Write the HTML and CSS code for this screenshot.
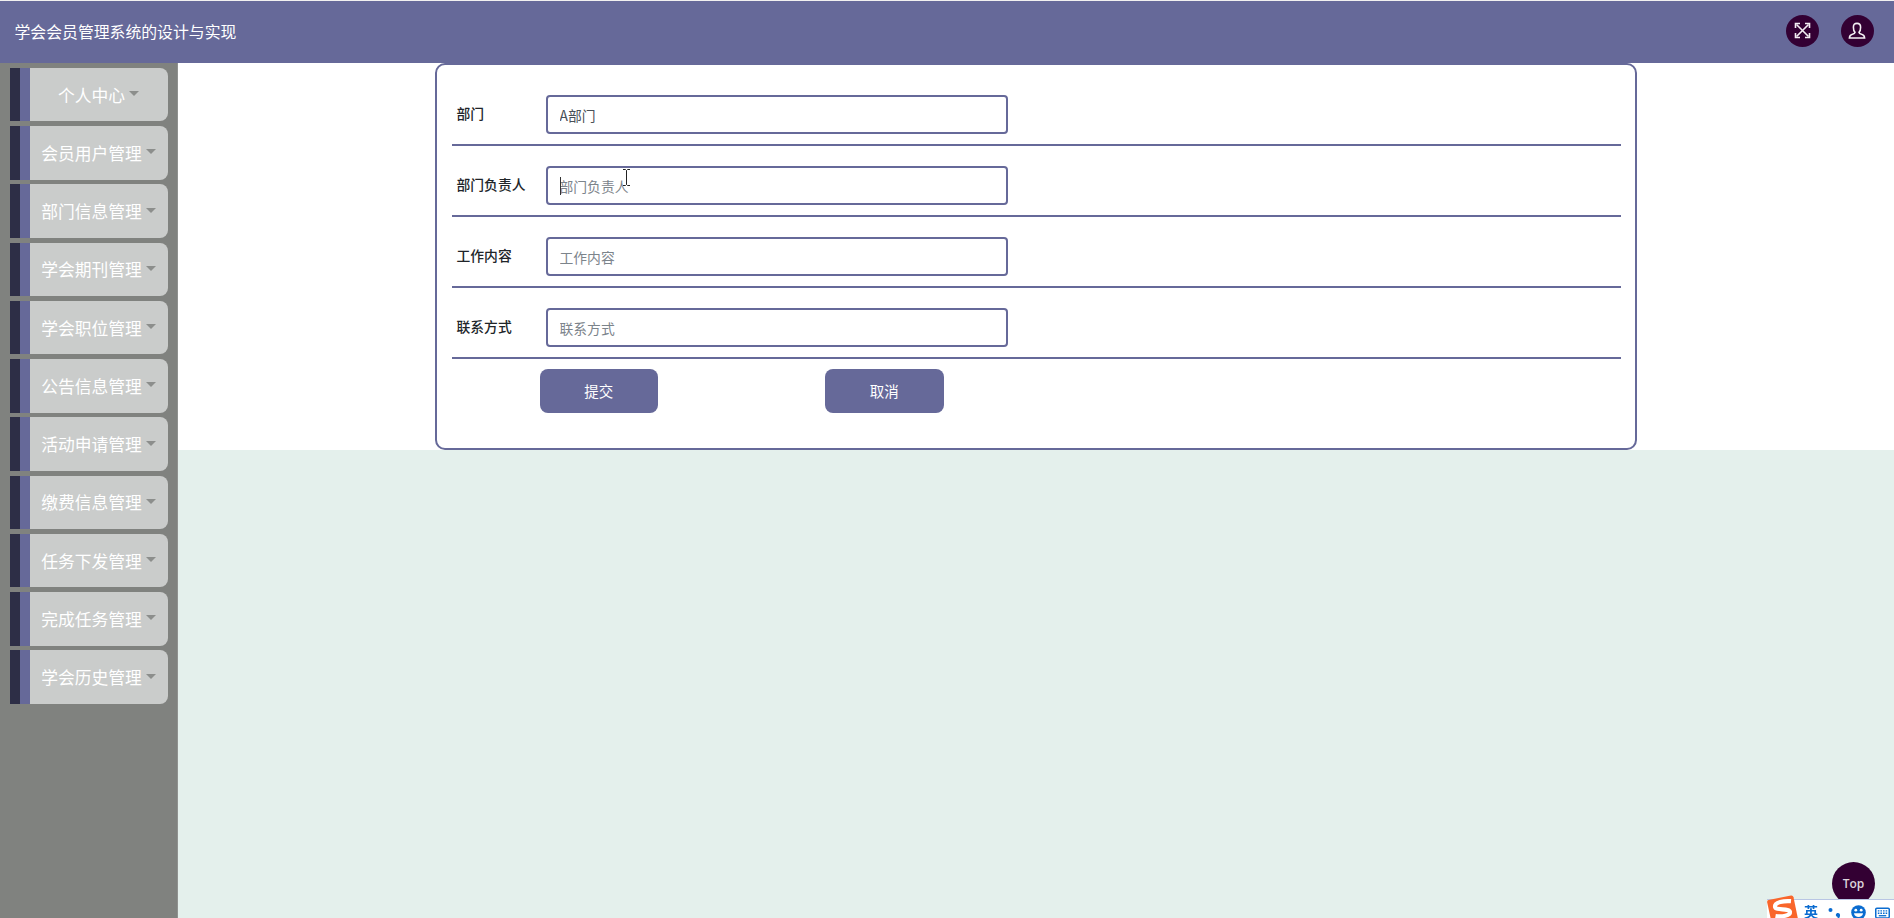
FILE: index.html
```
<!DOCTYPE html>
<html lang="zh-CN">
<head>
    <meta charset="UTF-8">
    <meta name="viewport" content="width=device-width, initial-scale=1.0">
    <title>学会会员管理系统的设计与实现</title>
    <link rel="stylesheet" href="styles.css">
</head>
<body>
    <header class="header">
        <h1 class="header-title">学会会员管理系统的设计与实现</h1>
        <div class="header-tools">
            <a class="round-btn" title="全屏">
                <svg width="17" height="17" viewBox="0 0 17 17" fill="none" stroke="#f3eef3" stroke-width="1.6">
                    <path d="M2.500 2.500l12 12M14.500 2.500l-12 12"/>
                    <path d="M1.500 6V1.500H6M11 1.500h4.500V6M15.500 11v4.500H11M6 15.500H1.500V11"/>
                </svg>
            </a>
            <a class="round-btn" title="个人">
                <svg width="18" height="18" viewBox="0 0 18 18" fill="none" stroke="#f3eef3" stroke-width="1.6">
                    <path d="M7 10.300C5.600 9 5.400 7.500 5.400 5.200C5.400 2.400 6.500 1.400 9 1.400s3.600 1 3.600 3.800C12.600 7.500 12.400 9 11 10.300c.2 1.200 1.200 1.500 2.700 2 1.700.5 2.700 1.100 2.900 3.700H1.400c.2-2.600 1.200-3.200 2.900-3.700C5.800 11.800 6.800 11.500 7 10.300z"/>
                </svg>
            </a>
        </div>
    </header>

    <div class="wrapper">
        <nav class="sidebar">
            <a class="menu-item">个人中心</a>
            <a class="menu-item">会员用户管理</a>
            <a class="menu-item">部门信息管理</a>
            <a class="menu-item">学会期刊管理</a>
            <a class="menu-item">学会职位管理</a>
            <a class="menu-item">公告信息管理</a>
            <a class="menu-item">活动申请管理</a>
            <a class="menu-item">缴费信息管理</a>
            <a class="menu-item">任务下发管理</a>
            <a class="menu-item">完成任务管理</a>
            <a class="menu-item">学会历史管理</a>
        </nav>

        <main class="content">
            <div class="content-inner">
                <form class="form-card">
                    <div class="form-row">
                        <label for="bumen">部门</label>
                        <input type="text" id="bumen" value="A部门" placeholder="部门">
                    </div>
                    <div class="form-row">
                        <label for="fuzeren">部门负责人</label>
                        <div class="input-wrap">
                            <input type="text" id="fuzeren" placeholder="部门负责人">
                            <span class="caret"></span>
                            <svg class="ibeam" width="9" height="17" viewBox="0 0 9 17" fill="none" stroke="#222" stroke-width="1">
                                <path d="M1 .5h2.500l1 1 1-1H8M4.500 1.500v14M1 16.500h2.500l1-1 1 1H8"/>
                            </svg>
                        </div>
                    </div>
                    <div class="form-row">
                        <label for="neirong">工作内容</label>
                        <input type="text" id="neirong" placeholder="工作内容">
                    </div>
                    <div class="form-row">
                        <label for="lianxi">联系方式</label>
                        <input type="text" id="lianxi" placeholder="联系方式">
                    </div>
                    <div class="form-actions">
                        <button type="button" class="btn">提交</button>
                        <button type="button" class="btn">取消</button>
                    </div>
                </form>
            </div>
        </main>
    </div>

    <a class="back-top">Top</a>

    <!-- input method bar -->
    <div class="ime-bar">
        <svg class="ime-logo" width="32" height="24" viewBox="0 0 32 24">
            <path d="M1.500 5L24 .5q2-.3 2.500 1.700L31 24H3.800L.2 7.500Q-.2 5.400 1.500 5z" fill="#f9662b"/>
            <path d="M24 6.200C17 5.600 7.500 7.200 8 11.800c.5 4.200 14.500 1 15 5.200.4 3.500-8 5-14.500 4" fill="none" stroke="#fff" stroke-width="4.200"/>
        </svg>
        <span class="ime-lang">英</span>
        <svg class="ime-dots" width="13" height="14" viewBox="0 0 13 14" fill="#0b6cd0">
            <circle cx="2.500" cy="3" r="2"/>
            <path d="M8.500 6.500c2-1.200 4 .3 3.500 2.600-.3 1.900-1.600 3.300-3.300 3.900l-.5-1.100c1-.5 1.500-1.100 1.600-1.900C7.800 9.800 7.200 7.600 8.500 6.500z"/>
        </svg>
        <svg class="ime-face" width="15" height="15" viewBox="0 0 15 15">
            <circle cx="7.500" cy="7.500" r="7.300" fill="#0b6cd0"/>
            <circle cx="4.800" cy="5.200" r="1.400" fill="#fff"/>
            <circle cx="10.200" cy="5.200" r="1.400" fill="#fff"/>
            <path d="M3 8.300h9c-.4 5-8.600 5-9 0z" fill="#fff"/>
        </svg>
        <svg class="ime-keys" width="15" height="12" viewBox="0 0 16 12" fill="none" stroke="#0b6cd0">
            <rect x=".8" y=".8" width="14.400" height="10.400" rx="1.200" stroke-width="1.600"/>
            <path d="M3 3.700h10M3 6.200h10" stroke-width="1.500" stroke-dasharray="1.700 1.070"/>
            <path d="M4 8.900h8" stroke-width="1.400"/>
        </svg>
    </div>
</body>
</html>
```
FILE: styles.css
```
* {
    box-sizing: border-box;
}
body {
    margin: 0;
    height: 918px;
    overflow: hidden;
    display: flex;
    flex-direction: column;
    background: #e4f0ec;
    font-family: "Noto Sans CJK SC", "Noto Sans", sans-serif;
    font-size: 13.800px;
}
.header {
    flex: none;
    display: flex;
    align-items: center;
    justify-content: space-between;
    height: 63px;
    padding: 0 20.500px 0 14.500px;
    background: #666999;
    border-top: 1px solid #f1f0f0;
}
.header-title {
    margin: -2px 0 0;
    color: #fff;
    font-size: 15.850px;
    font-weight: 400;
}
.header-tools {
    display: flex;
    gap: 21.500px;
    margin-top: -3px;
}
.round-btn {
    display: flex;
    align-items: center;
    justify-content: center;
    width: 33px;
    height: 32px;
    border-radius: 50%;
    background: #330033;
}
.wrapper {
    flex: 1;
    display: flex;
    min-height: 0;
}
.sidebar {
    flex: none;
    display: flex;
    flex-direction: column;
    gap: 4.800px;
    width: 178px;
    padding: 5px 10px;
    background: #80827f;
    border-right: 1px solid #909290;
}
.menu-item {
    display: flex;
    align-items: center;
    justify-content: center;
    height: 53.450px;
    width: 158px;
    flex: none;
    padding-right: 1px;
    /* two colour strips on the left side */
    border-left: 10px solid #2d2e46;
    box-shadow: inset 10px 0 0 #666999;
    padding-left: 10px;
    border-radius: 0 8px 8px 0;
    background: #cacccb;
    color: #fff;
    font-size: 16.750px;
}
.menu-item::after {
    content: "";
    margin: -2px 0 0 4px;
    border: 5px solid transparent;
    border-top-color: #8c8e8c;
    border-bottom: 0;
}
.content {
    flex: 1;
}
.content-inner {
    display: flex;
    padding-left: 257px;
    background: #fff;
}
.form-card {
    width: 1202px;
    height: 387px;
    padding: 10px 14.500px;
    border: 2px solid #666999;
    border-radius: 10px;
    background: #fff;
}
.form-row {
    display: flex;
    align-items: center;
    height: 71px;
    padding: 10px 0 0 5px;
    border-bottom: 2px solid #666999;
}
.form-row label {
    width: 89px;
    padding-bottom: 3px;
    color: #212529;
    font-weight: 500;
}
.form-row input {
    width: 462px;
    height: 39px;
    padding: 0 12px;
    border: 2px solid #666999;
    border-radius: 4px;
    background: #fff;
    color: #495057;
    font-family: inherit;
    font-size: 13.800px;
}
.form-row input::placeholder {
    color: #7c848b;
}
.input-wrap {
    position: relative;
}
.caret {
    position: absolute;
    left: 14px;
    top: 11px;
    width: 1px;
    height: 18px;
    background: #333;
}
.ibeam {
    position: absolute;
    left: 76px;
    top: 3px;
}
.form-actions {
    display: flex;
    gap: 167px;
    padding: 10px 0 0 88px;
}
.btn {
    width: 118.500px;
    height: 44px;
    padding: 0 0 2px;
    border: none;
    border-radius: 8px;
    background: #666999;
    color: #fff;
    font-family: inherit;
    font-size: 14.500px;
}
.back-top {
    position: fixed;
    right: 19px;
    bottom: 13px;
    display: flex;
    align-items: center;
    justify-content: center;
    width: 43px;
    height: 43px;
    border-radius: 50%;
    background: #330033;
    color: #ddd5dd;
    font-family: "Open Sans", sans-serif;
    font-size: 12px;
    font-weight: 600;
}
.ime-bar {
    position: fixed;
    right: 0;
    bottom: 0;
    display: flex;
    align-items: flex-start;
    width: 127px;
    height: 19px;
    background: #fff;
    border-top: 1px solid #b9c6e4;
}
.ime-logo {
    flex: none;
    margin: -5px 5px 0 0;
}
.ime-lang {
    margin-top: 4px;
    color: #0b6cd0;
    font-size: 14px;
    font-weight: 700;
    line-height: 14px;
}
.ime-dots {
    margin: 7px 0 0 10px;
}
.ime-face {
    margin: 5px 0 0 10px;
}
.ime-keys {
    margin: 7px 0 0 9px;
}
```
